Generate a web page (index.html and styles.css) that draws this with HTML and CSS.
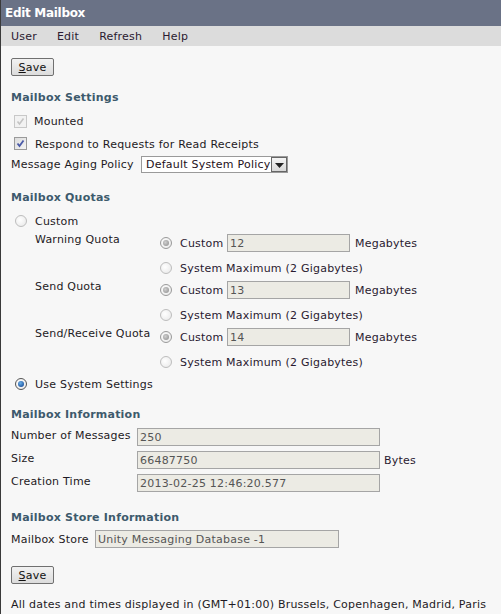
FILE: index.html
```html
<!DOCTYPE html>
<html>
<head>
<meta charset="utf-8">
<link rel="stylesheet" href="styles.css">
</head>
<body>
<div class="page">
  <div class="titlebar">Edit Mailbox</div>
  <div class="menubar">
    <span class="menu-item">User</span>
    <span class="menu-item">Edit</span>
    <span class="menu-item">Refresh</span>
    <span class="menu-item">Help</span>
  </div>
  <div class="content">
    <div class="toolbar"><span class="btn"><u>S</u>ave</span></div>

    <div class="section-title first">Mailbox Settings</div>
    <div class="row check-row r1">
      <span class="checkbox disabled"><svg viewBox="0 0 13 13" width="13" height="13"><path d="M3.5 6.5 L5.5 9 L9.5 3.5" fill="none" stroke="#c4c4c4" stroke-width="1.6"/></svg></span>
      <span class="check-label">Mounted</span>
    </div>
    <div class="row check-row r2">
      <span class="checkbox"><svg viewBox="0 0 13 13" width="13" height="13"><path d="M3.5 6.5 L5.5 9 L9.5 3.5" fill="none" stroke="#4a5aa8" stroke-width="1.8"/></svg></span>
      <span class="check-label">Respond to Requests for Read Receipts</span>
    </div>
    <div class="row select-row">
      <span class="select-label">Message Aging Policy</span>
      <span class="select"><span class="select-text">Default System Policy</span><span class="select-btn"><svg viewBox="0 0 9 5" width="9" height="5"><path d="M0 0 H9 L4.5 5 Z" fill="#222"/></svg></span></span>
    </div>

    <div class="section-title quotas">Mailbox Quotas</div>
    <div class="row radio-row top-radio">
      <span class="radio"></span><span class="radio-label">Custom</span>
    </div>
    <div class="quota-grid">
      <div class="quota-label">Warning Quota</div>
      <div class="quota-options">
        <div class="opt custom"><span class="radio checked-gray"></span><span class="opt-label">Custom</span><span class="field quota-field">12</span><span class="unit">Megabytes</span></div>
        <div class="opt sysmax"><span class="radio"></span><span class="opt-text">System Maximum (2 Gigabytes)</span></div>
      </div>
      <div class="quota-label">Send Quota</div>
      <div class="quota-options">
        <div class="opt custom"><span class="radio checked-gray"></span><span class="opt-label">Custom</span><span class="field quota-field">13</span><span class="unit">Megabytes</span></div>
        <div class="opt sysmax"><span class="radio"></span><span class="opt-text">System Maximum (2 Gigabytes)</span></div>
      </div>
      <div class="quota-label">Send/Receive Quota</div>
      <div class="quota-options">
        <div class="opt custom"><span class="radio checked-gray"></span><span class="opt-label">Custom</span><span class="field quota-field">14</span><span class="unit">Megabytes</span></div>
        <div class="opt sysmax"><span class="radio"></span><span class="opt-text">System Maximum (2 Gigabytes)</span></div>
      </div>
    </div>
    <div class="row radio-row">
      <span class="radio checked-blue"></span><span class="radio-label">Use System Settings</span>
    </div>

    <div class="section-title info">Mailbox Information</div>
    <div class="info-row first-info"><span class="info-label">Number of Messages</span><span class="field info-field">250</span></div>
    <div class="info-row"><span class="info-label">Size</span><span class="field info-field">66487750</span><span class="unit bytes">Bytes</span></div>
    <div class="info-row"><span class="info-label">Creation Time</span><span class="field info-field">2013-02-25 12:46:20.577</span></div>

    <div class="section-title store">Mailbox Store Information</div>
    <div class="store-row"><span class="store-label">Mailbox Store</span><span class="field store-field">Unity Messaging Database -1</span></div>

    <div class="toolbar bottom"><span class="btn"><u>S</u>ave</span></div>
    <div class="footer">All dates and times displayed in (GMT+01:00) Brussels, Copenhagen, Madrid, Paris</div>
  </div>
</div>
</body>
</html>
```
FILE: styles.css
```css
html, body {
  margin: 0;
  padding: 0;
  background: #f7f7f7;
}
body {
  font-family: "DejaVu Sans", Verdana, sans-serif;
  font-size: 11px;
  letter-spacing: 0.22px;
  color: #1e1a24;
}
.page {
  border-left: 1px solid #3a3a3a;
  min-height: 614px;
  box-sizing: border-box;
}
.titlebar {
  height: 26px;
  background: #6a7286;
  color: #ffffff;
  font-weight: bold;
  font-size: 12px;
  letter-spacing: -0.3px;
  line-height: 27px;
  padding-left: 4px;
}
.menubar {
  height: 20px;
  background: #dcdcdc;
  display: flex;
  gap: 20px;
  padding-left: 10px;
  line-height: 21px;
  color: #2a1a30;
}
.content {
  padding-left: 10px;
}
.toolbar {
  padding-top: 12px;
  height: 18px;
}
.toolbar.bottom {
  padding-top: 18px;
}
.btn {
  display: inline-flex;
  align-items: center;
  justify-content: center;
  box-sizing: border-box;
  width: 43px;
  height: 18px;
  border: 1px solid #707070;
  border-radius: 2px;
  background: linear-gradient(#f2f2f2, #dcdcdc);
  color: #111;
  font-size: 11px;
}
.btn u {
  text-decoration-thickness: 1px;
}
.section-title {
  height: 16px;
  line-height: 17px;
  font-weight: bold;
  color: #3d5a6c;
  font-size: 11px;
}
.section-title.first { margin-top: 13px; }
.section-title.quotas { margin-top: 16px; }
.section-title.info { margin-top: 11px; }
.section-title.store { margin-top: 13px; }

.row {
  display: flex;
  align-items: center;
}
.check-row.r1 { margin-top: 5px; height: 22px; }
.check-row.r2 { height: 23px; }
.checkbox {
  box-sizing: border-box;
  width: 13px;
  height: 13px;
  border: 1px solid #9a9a9a;
  background: linear-gradient(135deg, #dcdcdc, #f4f4f4);
  margin-left: 3px;
  display: inline-flex;
}
.checkbox svg { margin: -1px; }
.checkbox.disabled {
  border-color: #c8c8c8;
  background: #f2f2f2;
}
.check-label {
  margin-left: 7px;
  padding-top: 1px;
}
.r2 .check-label { margin-left: 8px; }
.select-row {
  height: 18px;
}
.select-label {
  width: 130px;
  padding-top: 1px;
}
.select {
  box-sizing: border-box;
  width: 147px;
  height: 17px;
  border: 1px solid #9a9a9a;
  background: #ffffff;
  display: flex;
  align-items: center;
  padding-left: 4px;
  color: #1e1020;
}
.select-text {
  flex: 1;
  white-space: nowrap;
  overflow: hidden;
}
.select-btn {
  box-sizing: border-box;
  width: 16px;
  height: 15px;
  border: 1px solid #666;
  background: linear-gradient(#f4f4f4, #d8d8d8);
  display: flex;
  align-items: center;
  justify-content: center;
  flex: none;
}
.select-btn svg { margin-top: 2px; }

.radio {
  box-sizing: border-box;
  width: 12px;
  height: 12px;
  border-radius: 50%;
  border: 1px solid #bdbdbd;
  background: radial-gradient(circle at 40% 40%, #ffffff, #e6e6e6);
  flex: none;
  position: relative;
}
.radio.checked-gray::after,
.radio.checked-blue::after {
  content: "";
  position: absolute;
  left: 2px;
  top: 2px;
  width: 6px;
  height: 6px;
  border-radius: 50%;
}
.radio.checked-gray {
  border-color: #9a9a9a;
}
.radio.checked-gray::after {
  background: radial-gradient(circle at 40% 40%, #d0d0d0, #8a8a8a);
}
.radio.checked-blue {
  border-color: #555;
}
.radio.checked-blue::after {
  background: radial-gradient(circle at 40% 35%, #6ab0e8, #0a3a8a);
}
.radio-row {
  height: 22px;
  padding-left: 4px;
}
.top-radio {
  margin-top: 5px;
}
.radio-label {
  margin-left: 8px;
  padding-top: 1px;
}
.quota-grid {
  display: grid;
  grid-template-columns: 125px auto;
  padding-left: 24px;
}
.quota-label {
  line-height: 16px;
}
.opt {
  display: flex;
  align-items: center;
}
.opt.custom {
  height: 22px;
}
.opt.sysmax {
  height: 22px;
  padding-top: 3px;
}
.opt-label {
  width: 47px;
  margin-left: 8px;
  padding-top: 1px;
  color: #2a1a30;
}
.opt-text {
  margin-left: 8px;
  padding-top: 1px;
  color: #2a1a30;
}
.field {
  box-sizing: border-box;
  height: 18px;
  border: 1px solid #a5a5a5;
  background: #ecebe4;
  color: #555555;
  padding-left: 2px;
  padding-top: 1px;
  display: flex;
  align-items: center;
  white-space: nowrap;
}
.quota-field {
  width: 123px;
}
.unit {
  margin-left: 5px;
  padding-top: 1px;
  color: #2a1a30;
}
.info-row {
  display: flex;
  align-items: flex-start;
  height: 23px;
}
.first-info { margin-top: 5px; }
.info-label {
  width: 126px;
  line-height: 17px;
}
.info-field {
  width: 243px;
  margin-top: 1px;
}
.unit.bytes {
  margin-left: 4px;
  line-height: 18px;
  margin-top: 1px;
}
.store-row {
  display: flex;
  align-items: center;
  margin-top: 5px;
  height: 18px;
}
.store-label {
  width: 84px;
}
.store-field {
  width: 244px;
}
.footer {
  margin-top: 12px;
  line-height: 17px;
  white-space: nowrap;
}
```
